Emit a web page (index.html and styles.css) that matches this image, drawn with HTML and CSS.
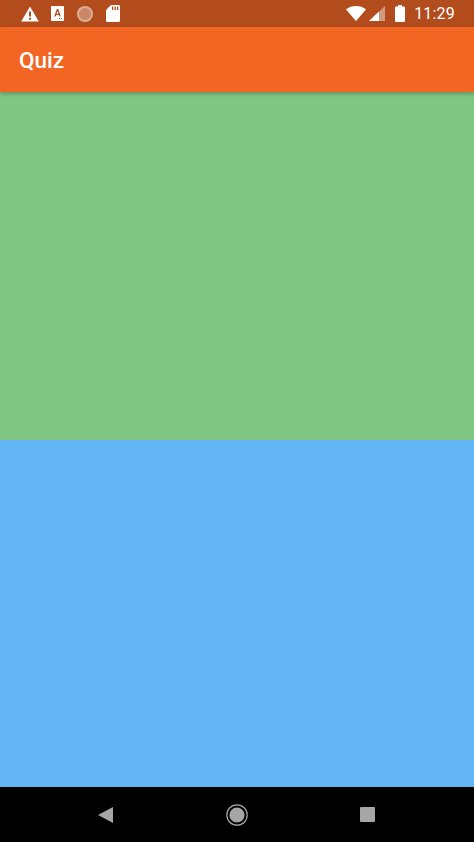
FILE: index.html
```html
<!DOCTYPE html>
<html lang="en">
<head>
    <meta charset="UTF-8">
    <meta name="viewport" content="width=device-width, initial-scale=1.0">
    <title>Quiz</title>
    <link rel="stylesheet" href="styles.css">
</head>
<body>
    <div class="screen">
        <div class="status-bar">
            <div class="status-left">
                <svg class="icon-alert" viewBox="0 0 18 16"><path fill-rule="evenodd" fill="#fff" d="M9 0.5L17.8 15.5H0.2ZM8 5.5V10.5H10V5.5ZM8 11.7V13.7H10V11.7Z"/></svg>
                <svg class="icon-font" viewBox="0 0 13 15"><path fill="#fff" d="M1 0H12a1 1 0 0 1 1 1V14a1 1 0 0 1-1 1H1a1 1 0 0 1-1-1V1a1 1 0 0 1 1-1Z"/><path fill="#b34c1c" d="M3.2 10.5L5.8 3H7.2L9.8 10.5H8.4L7.9 9H5.1L4.6 10.5ZM5.5 7.8H7.5L6.5 4.8Z"/><path fill="#b34c1c" d="M8 12H9V13H8ZM10 12H11V13H10Z"/></svg>
                <svg class="icon-circle" viewBox="0 0 18 18"><circle cx="9" cy="9" r="9" fill="#dcae98"/><circle cx="9" cy="9" r="6.8" fill="#cb8769"/></svg>
                <svg class="icon-sd" viewBox="0 0 14 17"><path fill="#fff" d="M5 0H12.5A1.5 1.5 0 0 1 14 1.5V15.5A1.5 1.5 0 0 1 12.5 17H1.5A1.5 1.5 0 0 1 0 15.5V5Z"/><path fill="#b34c1c" d="M6 1.5H7.3V5H6ZM8.5 1.5H9.8V5H8.5ZM11 1.5H12.3V5H11Z"/></svg>
            </div>
            <div class="status-right">
                <svg class="icon-wifi" viewBox="0 0 20 15"><path fill="#fff" d="M10 15L0 3.4C2.8 1.2 6.2 0 10 0S17.2 1.2 20 3.4Z"/></svg>
                <svg class="icon-signal" viewBox="0 0 16 15"><path fill="#d09a80" d="M16 0V15H0Z"/><path fill="#fff" d="M10 5.6V15H0Z"/></svg>
                <svg class="icon-battery" viewBox="0 0 10 17"><path fill="#fff" d="M3 0H7V1.5H9a1 1 0 0 1 1 1V16a1 1 0 0 1-1 1H1a1 1 0 0 1-1-1V2.5a1 1 0 0 1 1-1H3Z"/></svg>
                <span class="clock">11:29</span>
            </div>
        </div>
        <div class="app-bar">Quiz</div>
        <div class="panels">
            <div class="panel panel-green"></div>
            <div class="panel panel-blue"></div>
        </div>
        <div class="nav-bar">
            <svg class="nav-back" viewBox="0 0 15 16"><path fill="#a6a6a6" d="M15 0V16L0 8Z"/></svg>
            <svg class="nav-home" viewBox="0 0 22 22"><circle cx="11" cy="11" r="10.2" fill="none" stroke="#a6a6a6" stroke-width="1.2"/><circle cx="11" cy="11" r="7.6" fill="#a6a6a6"/></svg>
            <div class="nav-recent"></div>
        </div>
    </div>
</body>
</html>
```
FILE: styles.css
```css
html, body {
    margin: 0;
    padding: 0;
}
body {
    font-family: Roboto, "Noto Sans", sans-serif;
    background-color: #000;
}
svg {
    display: block;
    flex: none;
}
.screen {
    width: 474px;
    height: 842px;
    display: flex;
    flex-direction: column;
    overflow: hidden;
}
.status-bar {
    height: 27px;
    flex: none;
    display: flex;
    justify-content: space-between;
    align-items: center;
    background-color: #b34c1c;
    color: #fff;
}
.status-left {
    display: flex;
    align-items: center;
    padding-left: 21px;
}
.status-right {
    display: flex;
    align-items: center;
    padding-right: 19px;
}
.icon-alert {
    width: 18px;
    height: 16px;
    margin-right: 12px;
}
.icon-font {
    width: 13px;
    height: 15px;
    margin-right: 13px;
}
.icon-circle {
    width: 16px;
    height: 16px;
    margin-right: 13px;
}
.icon-sd {
    width: 14px;
    height: 17px;
}
.icon-wifi {
    width: 20px;
    height: 15px;
    margin-right: 3px;
}
.icon-signal {
    width: 16px;
    height: 15px;
    margin-right: 10px;
}
.icon-battery {
    width: 10px;
    height: 17px;
    margin-right: 9px;
}
.clock {
    font-size: 16px;
    letter-spacing: 0.2px;
}
.app-bar {
    height: 65px;
    flex: none;
    display: flex;
    align-items: center;
    padding-left: 19px;
    background-color: #f26522;
    color: #fff;
    font-size: 22.5px;
    font-weight: 500;
    box-shadow: 0 2px 4px rgba(0,0,0,0.25);
    position: relative;
}
.panels {
    flex: 1;
    display: flex;
    flex-direction: column;
}
.panel {
    flex: 1;
}
.panel-green {
    background-color: #81c784;
}
.panel-blue {
    background-color: #64b5f6;
}
.nav-bar {
    height: 55px;
    flex: none;
    display: flex;
    align-items: center;
    justify-content: space-between;
    padding: 0 99px 0 98px;
    background-color: #000;
}
.nav-back {
    width: 15px;
    height: 16px;
}
.nav-home {
    width: 22px;
    height: 22px;
}
.nav-recent {
    width: 15px;
    height: 15px;
    border-radius: 1px;
    background-color: #a6a6a6;
}
```
